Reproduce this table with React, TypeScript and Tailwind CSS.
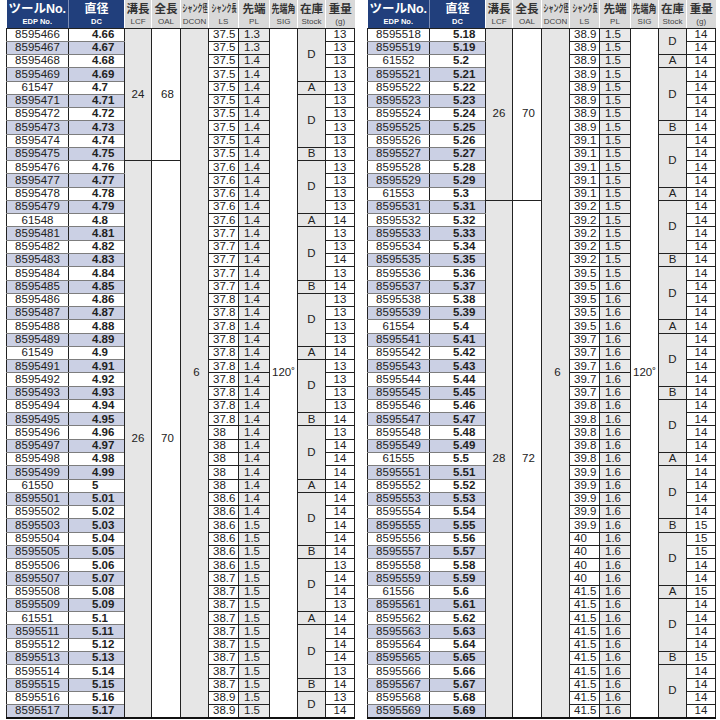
import React from 'react';

type Row = { h: number; edp: string; dc: string; ls: string; pl: string; stock: string; g: number };
type Group = { lcf: string; oal: string; span: number };

// LS by upper bound of hundredths
const lsTable: [number, string][] = [
  [475, '37.5'], [480, '37.6'], [485, '37.7'], [495, '37.8'], [500, '38'],
  [506, '38.6'], [515, '38.7'], [525, '38.9'], [530, '39.1'], [535, '39.2'],
  [540, '39.5'], [545, '39.7'], [550, '39.8'], [555, '39.9'], [559, '40'], [569, '41.5'],
];

const light = new Set([
  466, 467, 468, 469, 470, 471, 472, 473, 474, 475, 476, 477, 478, 479,
  481, 482, 484, 486, 487, 488, 489, 491, 492, 493, 494, 496, 506, 509, 514, 516,
]);
const heavy = new Set([555, 556, 557, 560, 565]);

const buildRows = (from: number, to: number): Row[] => {
  const rows: Row[] = [];
  for (let h = from; h <= to; h++) {
    const ls = lsTable.find(([max]) => h <= max)![1];
    const pl = h <= 467 ? '1.3' : h <= 502 ? '1.4' : h <= 536 ? '1.5' : '1.6';
    rows.push({
      h,
      edp: h % 10 === 0 ? String(61500 + h / 10) : String(8595000 + h),
      dc: String(h / 100),
      ls,
      pl,
      stock: h % 10 === 0 ? 'A' : h % 10 === 5 ? 'B' : 'D',
      g: light.has(h) ? 13 : heavy.has(h) ? 15 : 14,
    });
  }
  return rows;
};

const stockRuns = (rows: Row[]) => {
  const runs: Record<number, number> = {};
  let i = 0;
  while (i < rows.length) {
    let span = 1;
    if (rows[i].stock === 'D') {
      while (i + span < rows.length && rows[i + span].stock === 'D') span++;
    }
    runs[i] = span;
    i += span;
  }
  return runs;
};

const GrayHead = ({ jp, en, squeeze }: { jp: string; en: string; squeeze?: 'tight' | 'mid' }) => (
  <th className="bg-[#d9d9d9] border-l border-l-white border-b border-b-[#222] p-0 font-normal align-middle">
    <div className="flex flex-col items-center">
      <div className="flex justify-center w-full h-[16px] items-center">
        {squeeze === 'tight' ? (
          <span className="inline-block shrink-0 whitespace-nowrap text-[10px] leading-[16px] font-bold text-[#333] scale-x-[0.5]">{jp}</span>
        ) : squeeze === 'mid' ? (
          <span className="inline-block shrink-0 whitespace-nowrap text-[11px] leading-[16px] font-bold text-[#333] scale-x-[0.72]">{jp}</span>
        ) : (
          <span className="whitespace-nowrap text-[11.5px] leading-[16px] font-bold text-[#333]">{jp}</span>
        )}
      </div>
      <div className="text-[8px] leading-[9px] text-[#444] whitespace-nowrap font-['Liberation_Sans',sans-serif]">{en}</div>
    </div>
  </th>
);

const Sheet = ({ rows, groups }: { rows: Row[]; groups: Group[] }) => {
  const runs = stockRuns(rows);
  const groupStarts: Record<number, Group> = {};
  let acc = 0;
  groups.forEach((g) => {
    groupStarts[acc] = g;
    acc += g.span;
  });

  return (
    <table className="table-fixed border-collapse w-[348px] border-b-2 border-b-[#111] text-[11.5px] text-[#222] font-['Liberation_Sans',Arial,sans-serif]">
      <colgroup>
        <col className="w-[62px]" />
        <col className="w-[56px]" />
        <col className="w-[27px]" />
        <col className="w-[29px]" />
        <col className="w-[28px]" />
        <col className="w-[30px]" />
        <col className="w-[31px]" />
        <col className="w-[28px]" />
        <col className="w-[28px]" />
        <col className="w-[29px]" />
      </colgroup>
      <thead className="font-['Liberation_Sans','Noto_Sans_CJK_JP',sans-serif]">
        <tr className="h-[28px]">
          <th className="bg-[#213f7c] border-b border-b-[#222] p-0 text-white align-middle">
            <div className="text-[12.5px] font-bold leading-[16px] whitespace-nowrap">ツールNo.</div>
            <div className="text-[7.5px] font-bold leading-[9px]">EDP No.</div>
          </th>
          <th className="bg-[#213f7c] border-l border-l-[#7a8cb5] border-b border-b-[#222] p-0 text-white align-middle">
            <div className="text-[12px] font-bold leading-[16px]">直径</div>
            <div className="text-[7.5px] font-bold leading-[9px]">DC</div>
          </th>
          <GrayHead jp="溝長" en="LCF" />
          <GrayHead jp="全長" en="OAL" />
          <GrayHead jp="シャンク径" en="DCON" squeeze="tight" />
          <GrayHead jp="シャンク長" en="LS" squeeze="tight" />
          <GrayHead jp="先端" en="PL" />
          <GrayHead jp="先端角" en="SIG" squeeze="mid" />
          <GrayHead jp="在庫" en="Stock" />
          <GrayHead jp="重量" en="(g)" />
        </tr>
      </thead>
      <tbody>
        {rows.map((r, i) => {
          const stripe = i % 2 === 1 ? 'bg-[#cbd0e4]' : 'bg-white';
          const grp = groupStarts[i];
          return (
            <tr key={r.h} className="h-[13.27px]">
              <td className={`${stripe} p-0 leading-none text-center border-l border-l-[#222] border-b border-b-[#7d7d7d]`}>{r.edp}</td>
              <td className={`${stripe} p-0 leading-none pl-[23px] font-bold border-l border-l-[#222] border-b border-b-[#7d7d7d]`}>{r.dc}</td>
              {grp && (
                <>
                  <td rowSpan={grp.span} className="p-0 leading-none text-center bg-[#e6e6e6] border-l border-l-[#222] border-b border-b-[#222]">{grp.lcf}</td>
                  <td rowSpan={grp.span} className="p-0 leading-none text-center pl-[3px] bg-white border-l border-l-[#222] border-b border-b-[#222]">{grp.oal}</td>
                </>
              )}
              {i === 0 && (
                <td rowSpan={rows.length} className="p-0 leading-none text-center pl-[4px] bg-[#e6e6e6] border-l border-l-[#222]">6</td>
              )}
              <td className="p-0 leading-none pl-[4px] bg-white border-l border-l-[#222] border-b border-b-[#222]">{r.ls}</td>
              <td className="p-0 leading-none pl-[5px] bg-[#e9e9e9] border-l border-l-[#222] border-b border-b-[#222]">{r.pl}</td>
              {i === 0 && (
                <td rowSpan={rows.length} className="p-0 leading-none text-center bg-white border-l border-l-[#222]">120˚</td>
              )}
              {runs[i] !== undefined && (
                <td rowSpan={runs[i]} className="p-0 leading-none text-center bg-[#e6e6e6] border-l border-l-[#222] border-b border-b-[#222]">{r.stock}</td>
              )}
              <td className="p-0 leading-none text-center bg-white border-l border-l-[#222] border-r border-r-[#222] border-b border-b-[#222]">{r.g}</td>
            </tr>
          );
        })}
      </tbody>
    </table>
  );
};

const leftRows = buildRows(466, 517);
const rightRows = buildRows(518, 569);

export default function App() {
  return (
    <div className="w-[720px] h-[720px] bg-white overflow-hidden flex items-start gap-[12px] pl-[6px]">
      <Sheet rows={leftRows} groups={[{ lcf: '24', oal: '68', span: 10 }, { lcf: '26', oal: '70', span: 42 }]} />
      <Sheet rows={rightRows} groups={[{ lcf: '26', oal: '70', span: 13 }, { lcf: '28', oal: '72', span: 39 }]} />
    </div>
  );
}
